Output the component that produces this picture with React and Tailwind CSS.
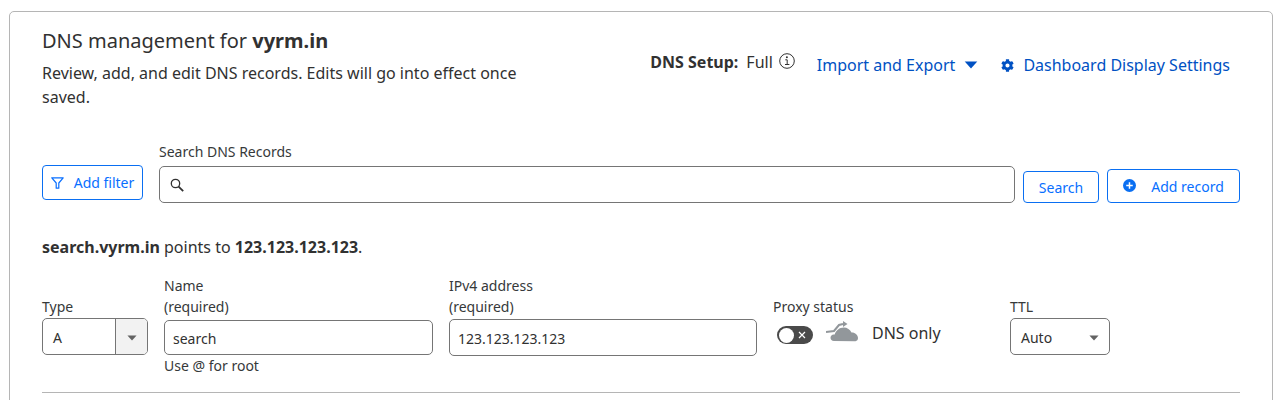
import React from "react"
import { FaCog } from "react-icons/fa"

const Caret = ({ className }) => (
  <svg viewBox="0 0 12 7" className={className} fill="currentColor">
    <path d="M0.5 0.5h11L6 6.5z" />
  </svg>
)

const Label = ({ children }) => <div className="text-[14px] leading-[21px] text-[#36393a]">{children}</div>

const App = () => {
  return (
    <div className="h-[400px] overflow-hidden bg-white pl-[9px] pr-[10px] pt-[11px] font-['Noto_Sans',sans-serif] text-[#313131]">
      <div className="h-[500px] rounded-[5px] border border-[#b5b5b5] px-[32px] pt-[15px]">
        <div className="flex items-start justify-between">
          <div className="w-[490px]">
            <h2 className="text-[20px] leading-[28px]">
              DNS management for <span className="font-bold">vyrm.in</span>
            </h2>
            <p className="mt-[6px] text-[16px] leading-[24px]">
              Review, add, and edit DNS records. Edits will go into effect once saved.
            </p>
          </div>
          <div className="flex items-center pr-[10px] pt-[23px] text-[16px] leading-[24px]">
            <span className="mb-[6px] font-bold">DNS Setup:</span>
            <span className="mb-[6px] ml-[8px]">Full</span>
            <svg viewBox="0 0 16 16" className="mb-[8px] ml-[6px] h-[16px] w-[16px]" fill="none" stroke="currentColor">
              <circle cx="8" cy="8" r="7.300" />
              <path d="M6.300 6.800h1.900v4.700M6 11.500h4.400" />
              <circle cx="7.900" cy="4.300" r="1" fill="currentColor" stroke="none" />
            </svg>
            <span className="ml-[22px] text-[#0051c3]">Import and Export</span>
            <Caret className="ml-[9px] h-[8px] w-[14px] text-[#0051c3]" />
            <FaCog className="ml-[23px] h-[13px] w-[13px] text-[#0051c3]" />
            <span className="ml-[9px] text-[#0051c3]">Dashboard Display Settings</span>
          </div>
        </div>

        <div className="mt-[32px] flex items-end">
          <button className="mb-[3px] flex h-[35px] w-[101px] items-center justify-center rounded-[4px] border border-[#0a6ff2] text-[14px] text-[#086fff]">
            <svg viewBox="0 0 13 12" className="mr-[10px] h-[12px] w-[13px]" fill="none" stroke="currentColor" strokeWidth="1.200">
              <path d="M0.800 0.800h11.400L7.800 6v5.200H5.200V6z" strokeLinejoin="round" />
            </svg>
            Add filter
          </button>
          <div className="ml-[16px] flex-1">
            <Label>Search DNS Records</Label>
            <div className="mt-[4px] flex h-[37px] items-center rounded-[5px] border border-[#757575] pl-[10px]">
              <svg viewBox="0 0 14 14" className="h-[14px] w-[14px]" fill="none" stroke="#313131">
                <circle cx="5.500" cy="5.500" r="4.200" strokeWidth="1.300" />
                <path d="M8.600 8.600l4.600 4.600" strokeWidth="1.800" />
              </svg>
            </div>
          </div>
          <button className="ml-[8px] h-[32px] w-[76px] rounded-[4px] border border-[#0a6ff2] text-[14px] text-[#086fff]">
            Search
          </button>
          <button className="ml-[8px] flex h-[34px] w-[133px] items-center justify-center rounded-[4px] border border-[#0a6ff2] text-[14px] text-[#086fff]">
            <svg viewBox="0 0 14 14" className="mb-[2px] mr-[15px] h-[13px] w-[13px]">
              <circle cx="7" cy="7" r="7" fill="#0a6ff2" />
              <path d="M7 3.500v7M3.500 7h7" stroke="white" strokeWidth="1.600" />
            </svg>
            Add record
          </button>
        </div>

        <p className="mt-[32px] text-[16px] leading-[24px]">
          <span className="font-bold">search.vyrm.in</span> points to <span className="font-bold">123.123.123.123</span>.
        </p>

        <div className="mt-[16px] flex items-start">
          <div className="w-[106px] pt-[21px]">
            <Label>Type</Label>
            <div className="mt-[1px] flex h-[37px] overflow-hidden rounded-[5px] border border-[#757575] text-[14px]">
              <div className="flex flex-1 items-center pl-[10px] pt-[2px]">A</div>
              <div className="flex w-[32px] items-center justify-center border-l border-[#757575] bg-[#f2f2f2] pt-[2px]">
                <Caret className="h-[6px] w-[10px] text-[#636363]" />
              </div>
            </div>
          </div>
          <div className="ml-[16px] w-[269px]">
            <Label>Name</Label>
            <Label>(required)</Label>
            <div className="mt-[3px] flex h-[35px] items-center rounded-[5px] border border-[#757575] pl-[8px] pt-[2px] text-[14px]">search</div>
            <div className="text-[14px] leading-[21px] text-[#36393a]">Use @ for root</div>
          </div>
          <div className="ml-[16px] w-[308px]">
            <Label>IPv4 address</Label>
            <Label>(required)</Label>
            <div className="mt-[2px] flex h-[37px] items-center rounded-[5px] border border-[#757575] pl-[8px] pt-[2px] text-[14px]">123.123.123.123</div>
          </div>
          <div className="ml-[16px] w-[237px] pt-[21px]">
            <Label>Proxy status</Label>
            <div className="mt-[4px] flex items-center">
              <div className="ml-[4px] mt-[4px] flex h-[18px] w-[36px] items-center rounded-full bg-[#4a4a4a] px-[2px]">
                <div className="h-[15px] w-[15px] rounded-full bg-white" />
                <svg viewBox="0 0 8 8" className="ml-[4px] h-[8px] w-[8px]" stroke="white" strokeWidth="1.200">
                  <path d="M1 1l6 6M7 1l-6 6" />
                </svg>
              </div>
              <svg viewBox="0 0 32 21" className="mb-[3px] ml-[13px] h-[21px] w-[32px]" fill="#92979b">
                <path d="M8 20c-2.200 0-3.500-1.500-3.500-3.200 0-1.800 1.400-3.200 3.200-3.200h1c1.200-4.200 5-7 9-7 3.500 0 6.500 2 7.800 5 3.500-.2 6.500 2.500 6.500 5.500 0 1.700-1 3.100-2.500 3.100z" />
                <path d="M0 11l8-1 5-6 4-1" fill="none" stroke="#92979b" strokeWidth="2" />
                <path d="M17 0l4.500 3-4.500 3z" />
              </svg>
              <span className="ml-[14px] text-[16px] leading-[24px]">DNS only</span>
            </div>
          </div>
          <div className="w-[100px] pt-[21px]">
            <Label>TTL</Label>
            <div className="mt-[1px] flex h-[37px] items-center justify-between rounded-[5px] border border-[#757575] pl-[10px] pr-[10px] pt-[2px] text-[14px]">
              Auto
              <Caret className="h-[6px] w-[10px] text-[#636363]" />
            </div>
          </div>
        </div>

        <div className="mt-[16px] border-t border-[#b5b5b5]" />
      </div>
    </div>
  )
}

export default App
